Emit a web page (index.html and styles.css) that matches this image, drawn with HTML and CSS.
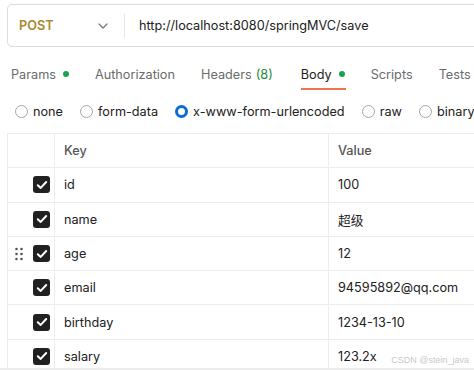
FILE: index.html
```html
<!DOCTYPE html>
<html>
<head>
<meta charset="utf-8">
<link rel="stylesheet" href="styles.css">
</head>
<body>
<div class="page">
  <div class="urlbar">
    <div class="method">
      <span class="method-name">POST</span>
      <svg class="chev" width="10" height="6" viewBox="0 0 10 6"><path d="M1 1l4 4 4-4" fill="none" stroke="#777" stroke-width="1.2" stroke-linecap="round" stroke-linejoin="round"/></svg>
    </div>
    <div class="url">http://localhost:8080/springMVC/save</div>
  </div>

  <div class="tabs">
    <div class="tab">Params <span class="dot"></span></div>
    <div class="tab">Authorization</div>
    <div class="tab wide">Headers <span class="count">(8)</span></div>
    <div class="tab active">Body <span class="dot"></span></div>
    <div class="tab">Scripts</div>
    <div class="tab">Tests</div>
  </div>

  <div class="radios">
    <label class="radio"><span class="circle"></span>none</label>
    <label class="radio"><span class="circle"></span>form-data</label>
    <label class="radio"><span class="circle on"></span>x-www-form-urlencoded</label>
    <label class="radio"><span class="circle"></span>raw</label>
    <label class="radio"><span class="circle"></span>binary</label>
  </div>

  <div class="table">
    <div class="row head">
      <div class="c-check"></div>
      <div class="c-key">Key</div>
      <div class="c-val">Value</div>
    </div>
    <div class="row">
      <div class="c-check"><span class="cb"><svg width="12" height="10" viewBox="0 0 12 10"><path d="M1.8 5.2l2.9 2.7L10.2 2" fill="none" stroke="#fff" stroke-width="2" stroke-linecap="round" stroke-linejoin="round"/></svg></span></div>
      <div class="c-key">id</div>
      <div class="c-val">100</div>
    </div>
    <div class="row">
      <div class="c-check"><span class="cb"><svg width="12" height="10" viewBox="0 0 12 10"><path d="M1.8 5.2l2.9 2.7L10.2 2" fill="none" stroke="#fff" stroke-width="2" stroke-linecap="round" stroke-linejoin="round"/></svg></span></div>
      <div class="c-key">name</div>
      <div class="c-val">超级</div>
    </div>
    <div class="row">
      <div class="c-check">
        <svg class="grip" width="8" height="14" viewBox="0 0 8 14"><g fill="#555"><circle cx="1.5" cy="2" r="1.3"/><circle cx="6.5" cy="2" r="1.3"/><circle cx="1.5" cy="7" r="1.3"/><circle cx="6.5" cy="7" r="1.3"/><circle cx="1.5" cy="12" r="1.3"/><circle cx="6.5" cy="12" r="1.3"/></g></svg>
        <span class="cb"><svg width="12" height="10" viewBox="0 0 12 10"><path d="M1.8 5.2l2.9 2.7L10.2 2" fill="none" stroke="#fff" stroke-width="2" stroke-linecap="round" stroke-linejoin="round"/></svg></span>
      </div>
      <div class="c-key">age</div>
      <div class="c-val">12</div>
    </div>
    <div class="row">
      <div class="c-check"><span class="cb"><svg width="12" height="10" viewBox="0 0 12 10"><path d="M1.8 5.2l2.9 2.7L10.2 2" fill="none" stroke="#fff" stroke-width="2" stroke-linecap="round" stroke-linejoin="round"/></svg></span></div>
      <div class="c-key">email</div>
      <div class="c-val">94595892@qq.com</div>
    </div>
    <div class="row">
      <div class="c-check"><span class="cb"><svg width="12" height="10" viewBox="0 0 12 10"><path d="M1.8 5.2l2.9 2.7L10.2 2" fill="none" stroke="#fff" stroke-width="2" stroke-linecap="round" stroke-linejoin="round"/></svg></span></div>
      <div class="c-key">birthday</div>
      <div class="c-val">1234-13-10</div>
    </div>
    <div class="row">
      <div class="c-check"><span class="cb"><svg width="12" height="10" viewBox="0 0 12 10"><path d="M1.8 5.2l2.9 2.7L10.2 2" fill="none" stroke="#fff" stroke-width="2" stroke-linecap="round" stroke-linejoin="round"/></svg></span></div>
      <div class="c-key">salary</div>
      <div class="c-val">123.2x</div>
    </div>
  </div>
  <div class="watermark">CSDN @stein_java</div>
  <div class="bottom-strip"></div>
</div>
</body>
</html>
```

FILE: styles.css
```css
* { box-sizing: border-box; }
html, body { margin: 0; padding: 0; background: #fff; }
body {
  font-family: Inter, "Noto Sans CJK SC", sans-serif;
  color: #212121;
  width: 474px;
  height: 370px;
  overflow: hidden;
}
.page { position: relative; width: 474px; height: 370px; overflow: hidden; }

.urlbar {
  display: flex;
  align-items: center;
  margin: 4px 0 0 7px;
  width: 500px;
  height: 43px;
  border: 1px solid #dcdcdc;
  border-radius: 5px;
}
.method {
  display: flex;
  align-items: center;
  width: 117px;
  height: 24px;
  padding-left: 11px;
  border-right: 1px solid #e6e6e6;
}
.method-name {
  color: #a98a2c;
  font-weight: 600;
  font-size: 12.7px;
  width: 79px;
}
.chev { display: block; }
.url {
  padding-left: 14px;
  font-size: 12.7px;
  color: #212121;
}

.tabs {
  display: flex;
  height: 43px;
  padding-left: 11px;
  white-space: nowrap;
}
.tab {
  display: flex;
  align-items: center;
  font-size: 12.7px;
  color: #6b6b6b;
  margin-right: 26px;
  height: 43px;
  padding-top: 11px;
  position: relative;
}
.tab.wide { margin-right: 28px; }
.tab.active { color: #212121; }
.tab.active::after {
  content: "";
  position: absolute;
  left: 0;
  right: -1px;
  bottom: 0;
  height: 2px;
  background: #f0734f;
}
.dot {
  display: inline-block;
  width: 6px;
  height: 6px;
  border-radius: 50%;
  background: #1aa34a;
  margin-left: 7px;
}
.count { color: #1a8a3e; margin-left: 4px; }

.radios {
  display: flex;
  align-items: center;
  height: 43px;
  padding-left: 15px;
  white-space: nowrap;
}
.radio {
  display: flex;
  align-items: center;
  font-size: 12.7px;
  color: #212121;
  margin-right: 17px;
}
.circle {
  width: 13px;
  height: 13px;
  border-radius: 50%;
  border: 1px solid #a6a6a6;
  margin-right: 5px;
}
.circle.on {
  border: 3.5px solid #0b6bd3;
}

.table {
  margin-left: 7px;
  width: 480px;
  border-top: 1px solid #ececec;
  border-left: 1px solid #ececec;
}
.row {
  display: flex;
  height: 34.3px;
  border-bottom: 1px solid #ececec;
  font-size: 12.7px;
}
.row.head { color: #555; font-weight: 500; }
.c-check {
  width: 47px;
  border-right: 1px solid #ececec;
  display: flex;
  align-items: center;
  justify-content: flex-end;
  padding-right: 4px;
  position: relative;
}
.c-key {
  width: 274px;
  border-right: 1px solid #ececec;
  display: flex;
  align-items: center;
  padding-left: 9px;
}
.c-val {
  flex: 1;
  display: flex;
  align-items: center;
  padding-left: 9px;
}
.cb {
  width: 17px;
  height: 17px;
  border-radius: 3px;
  background: #212121;
  display: flex;
  align-items: center;
  justify-content: center;
}
.grip {
  position: absolute;
  left: 7px;
  top: 50%;
  margin-top: -7px;
}
.watermark {
  position: absolute;
  right: 5px;
  bottom: 5px;
  font-size: 9px;
  color: #c9c9c9;
  font-family: "Liberation Sans", sans-serif;
}
.bottom-strip {
  position: absolute;
  left: 0;
  right: 0;
  bottom: 0;
  height: 2px;
  background: #ececec;
}
```
